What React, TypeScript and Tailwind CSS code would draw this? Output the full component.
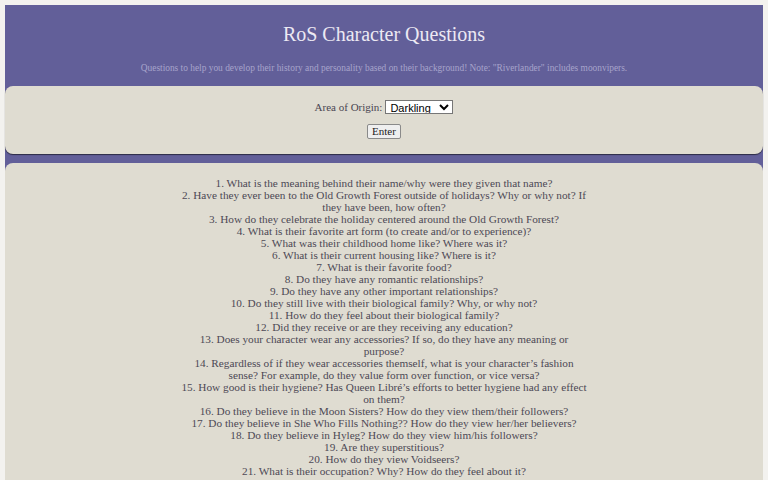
import { useState } from "react";

const questions = [
  "What is the meaning behind their name/why were they given that name?",
  "Have they ever been to the Old Growth Forest outside of holidays? Why or why not? If they have been, how often?",
  "How do they celebrate the holiday centered around the Old Growth Forest?",
  "What is their favorite art form (to create and/or to experience)?",
  "What was their childhood home like? Where was it?",
  "What is their current housing like? Where is it?",
  "What is their favorite food?",
  "Do they have any romantic relationships?",
  "Do they have any other important relationships?",
  "Do they still live with their biological family? Why, or why not?",
  "How do they feel about their biological family?",
  "Did they receive or are they receiving any education?",
  "Does your character wear any accessories? If so, do they have any meaning or\npurpose?",
  "Regardless of if they wear accessories themself, what is your character’s fashion\nsense? For example, do they value form over function, or vice versa?",
  "How good is their hygiene? Has Queen Libré’s efforts to better hygiene had any effect on them?",
  "Do they believe in the Moon Sisters? How do they view them/their followers?",
  "Do they believe in She Who Fills Nothing?? How do they view her/her believers?",
  "Do they believe in Hyleg? How do they view him/his followers?",
  "Are they superstitious?",
  "How do they view Voidseers?",
  "What is their occupation? Why? How do they feel about it?",
];

const origins = ["Darkling", "Riverlander", "Highlander", "Lowlander", "Islander"];

export default function App() {
  const [origin, setOrigin] = useState("Darkling");

  return (
    <div className="h-[480px] overflow-hidden bg-[#f3f2ef] pt-[5px] pl-[5px] pr-[5px] font-['Liberation_Serif',serif]">
      <div className="bg-[#625f99] min-h-[480px]">
        <div className="text-center pt-[16px]">
          <h1 className="text-[20px] leading-[26px] text-[#ece9f3]">RoS Character Questions</h1>
          <p className="mt-[15px] text-[9.4px] leading-[12px] text-[#a7a4cb]">
            Questions to help you develop their history and personality based on their background! Note: "Riverlander" includes moonvipers.
          </p>
        </div>

        <div className="mt-[12px] rounded-lg bg-[#dfdcd1] shadow-[0_1px_1px_rgba(0,0,0,0.55)] pt-[13px] pb-[15px] flex flex-col items-center">
          <div className="flex items-center gap-[3px] text-[11px] text-[#4a4652]">
            <label htmlFor="origin">Area of Origin:</label>
            <select
              id="origin"
              value={origin}
              onChange={(e) => setOrigin(e.target.value)}
              className="w-[68px] h-[14px] bg-white border border-[#767676] text-[11px] leading-[12px] text-black font-['Liberation_Sans',sans-serif]"
            >
              {origins.map((o) => (
                <option key={o}>{o}</option>
              ))}
            </select>
          </div>
          <button className="mt-[8px] h-[15px] px-[4px] border border-[#8a8a8a] rounded-[2px] bg-[#efefef] text-[11px] leading-[12px] text-[#222]">
            Enter
          </button>
        </div>

        <div className="mt-[9px] rounded-lg bg-[#dfdcd1] pt-[14px] pb-4 flex justify-center">
          <ol className="w-[408px] text-center text-[11.25px] leading-[12px] text-[#4d4955] whitespace-pre-line">
            {questions.map((q, i) => (
              <li key={i}>
                {i + 1}. {q}
              </li>
            ))}
          </ol>
        </div>
      </div>
    </div>
  );
}
